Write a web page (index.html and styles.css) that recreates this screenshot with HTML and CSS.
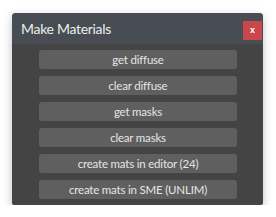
FILE: index.html
```html
<!DOCTYPE html>
<html lang="en">
<head>
    <meta charset="UTF-8">
    <meta name="viewport" content="width=device-width, initial-scale=1.0">
    <link rel="stylesheet" href="styles.css">
</head>
<body>

<div class="window">
    <div class="titlebar">
        <div class="title">Make Materials</div>
        <div class="close">x</div>
    </div>
    <div class="content">
        <div class="btn">get diffuse</div>
        <div class="btn">clear diffuse</div>
        <div class="btn">get masks</div>
        <div class="btn">clear masks</div>
        <div class="btn">create mats in editor (24)</div>
        <div class="btn">create mats in SME (UNLIM)</div>
    </div>
</div>

</body>
</html>
```

FILE: styles.css
```css
body {
    margin: 0;
    background-color: #ffffff;
    font-family: 'Lato', 'Open Sans', sans-serif;
}

.window {
    margin: 13px 0 0 12px;
    width: 251px;
    height: 192px;
    background-color: #444444;
    border-radius: 4px 4px 2px 2px;
    box-shadow: 0px 3px 10px rgba(0, 0, 0, 0.25);
    overflow: hidden;
}

.titlebar {
    height: 31px;
    background-color: #474d52;
    display: flex;
    justify-content: space-between;
    align-items: flex-start;
}

.title {
    color: #eceeef;
    font-size: 14px;
    letter-spacing: -0.3px;
    padding: 7px 0 0 9px;
}

.close {
    width: 19px;
    height: 19px;
    margin: 8px 1px 0 0;
    background-color: #c9474a;
    color: #ffffff;
    font-size: 9px;
    font-weight: bold;
    font-family: 'Liberation Sans', sans-serif;
    display: flex;
    justify-content: center;
    align-items: center;
    line-height: 1;
}

.content {
    display: flex;
    flex-direction: column;
    align-items: center;
    gap: 7px;
    padding: 6px 26px 0 27px;
}

.btn {
    width: 198px;
    height: 19px;
    background-color: #5f5f5f;
    border-radius: 3px;
    color: #e6e6e6;
    font-size: 11.5px;
    letter-spacing: -0.2px;
    display: flex;
    justify-content: center;
    align-items: center;
}
```
